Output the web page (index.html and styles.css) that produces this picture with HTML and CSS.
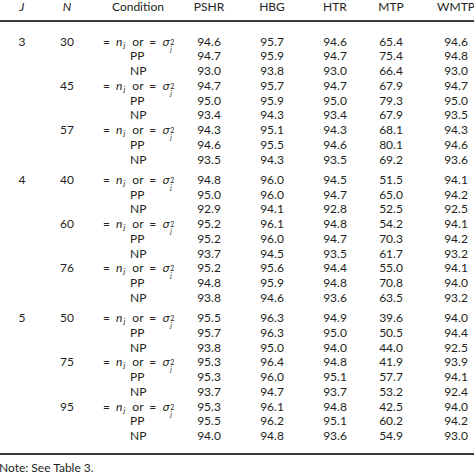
FILE: index.html
```html
<!DOCTYPE html>
<html>
<head>
<meta charset="utf-8">
<link rel="stylesheet" href="styles.css">
</head>
<body>
<div class="page">
  <div class="row head">
    <div class="c"><i>J</i></div>
    <div class="c"><i>N</i></div>
    <div class="c cond-h">Condition</div>
    <div class="c">PSHR</div>
    <div class="c">HBG</div>
    <div class="c">HTR</div>
    <div class="c">MTP</div>
    <div class="c">WMTP</div>
  </div>
  <div class="rule top"></div>
  <div class="body">
    <div class="group">
      <div class="row"><div class="c">3</div><div class="c">30</div><div class="cond eq">= <i>n</i><sub>j</sub> or = <i class="sig">σ</i><span class="ss"><span>2</span><span>j</span></span></div><div class="c">94.6</div><div class="c">95.7</div><div class="c">94.6</div><div class="c">65.4</div><div class="c">94.6</div></div>
      <div class="row"><div class="c"></div><div class="c"></div><div class="cond">PP</div><div class="c">94.7</div><div class="c">95.9</div><div class="c">94.7</div><div class="c">75.4</div><div class="c">94.8</div></div>
      <div class="row"><div class="c"></div><div class="c"></div><div class="cond">NP</div><div class="c">93.0</div><div class="c">93.8</div><div class="c">93.0</div><div class="c">66.4</div><div class="c">93.0</div></div>
      <div class="row"><div class="c"></div><div class="c">45</div><div class="cond eq">= <i>n</i><sub>j</sub> or = <i class="sig">σ</i><span class="ss"><span>2</span><span>j</span></span></div><div class="c">94.7</div><div class="c">95.7</div><div class="c">94.7</div><div class="c">67.9</div><div class="c">94.7</div></div>
      <div class="row"><div class="c"></div><div class="c"></div><div class="cond">PP</div><div class="c">95.0</div><div class="c">95.9</div><div class="c">95.0</div><div class="c">79.3</div><div class="c">95.0</div></div>
      <div class="row"><div class="c"></div><div class="c"></div><div class="cond">NP</div><div class="c">93.4</div><div class="c">94.3</div><div class="c">93.4</div><div class="c">67.9</div><div class="c">93.5</div></div>
      <div class="row"><div class="c"></div><div class="c">57</div><div class="cond eq">= <i>n</i><sub>j</sub> or = <i class="sig">σ</i><span class="ss"><span>2</span><span>j</span></span></div><div class="c">94.3</div><div class="c">95.1</div><div class="c">94.3</div><div class="c">68.1</div><div class="c">94.3</div></div>
      <div class="row"><div class="c"></div><div class="c"></div><div class="cond">PP</div><div class="c">94.6</div><div class="c">95.5</div><div class="c">94.6</div><div class="c">80.1</div><div class="c">94.6</div></div>
      <div class="row"><div class="c"></div><div class="c"></div><div class="cond">NP</div><div class="c">93.5</div><div class="c">94.3</div><div class="c">93.5</div><div class="c">69.2</div><div class="c">93.6</div></div>
    </div>
    <div class="group">
      <div class="row"><div class="c">4</div><div class="c">40</div><div class="cond eq">= <i>n</i><sub>j</sub> or = <i class="sig">σ</i><span class="ss"><span>2</span><span>j</span></span></div><div class="c">94.8</div><div class="c">96.0</div><div class="c">94.5</div><div class="c">51.5</div><div class="c">94.1</div></div>
      <div class="row"><div class="c"></div><div class="c"></div><div class="cond">PP</div><div class="c">95.0</div><div class="c">96.0</div><div class="c">94.7</div><div class="c">65.0</div><div class="c">94.2</div></div>
      <div class="row"><div class="c"></div><div class="c"></div><div class="cond">NP</div><div class="c">92.9</div><div class="c">94.1</div><div class="c">92.8</div><div class="c">52.5</div><div class="c">92.5</div></div>
      <div class="row"><div class="c"></div><div class="c">60</div><div class="cond eq">= <i>n</i><sub>j</sub> or = <i class="sig">σ</i><span class="ss"><span>2</span><span>j</span></span></div><div class="c">95.2</div><div class="c">96.1</div><div class="c">94.8</div><div class="c">54.2</div><div class="c">94.1</div></div>
      <div class="row"><div class="c"></div><div class="c"></div><div class="cond">PP</div><div class="c">95.2</div><div class="c">96.0</div><div class="c">94.7</div><div class="c">70.3</div><div class="c">94.2</div></div>
      <div class="row"><div class="c"></div><div class="c"></div><div class="cond">NP</div><div class="c">93.7</div><div class="c">94.5</div><div class="c">93.5</div><div class="c">61.7</div><div class="c">93.2</div></div>
      <div class="row"><div class="c"></div><div class="c">76</div><div class="cond eq">= <i>n</i><sub>j</sub> or = <i class="sig">σ</i><span class="ss"><span>2</span><span>j</span></span></div><div class="c">95.2</div><div class="c">95.6</div><div class="c">94.4</div><div class="c">55.0</div><div class="c">94.1</div></div>
      <div class="row"><div class="c"></div><div class="c"></div><div class="cond">PP</div><div class="c">94.8</div><div class="c">95.9</div><div class="c">94.8</div><div class="c">70.8</div><div class="c">94.0</div></div>
      <div class="row"><div class="c"></div><div class="c"></div><div class="cond">NP</div><div class="c">93.8</div><div class="c">94.6</div><div class="c">93.6</div><div class="c">63.5</div><div class="c">93.2</div></div>
    </div>
    <div class="group">
      <div class="row"><div class="c">5</div><div class="c">50</div><div class="cond eq">= <i>n</i><sub>j</sub> or = <i class="sig">σ</i><span class="ss"><span>2</span><span>j</span></span></div><div class="c">95.5</div><div class="c">96.3</div><div class="c">94.9</div><div class="c">39.6</div><div class="c">94.0</div></div>
      <div class="row"><div class="c"></div><div class="c"></div><div class="cond">PP</div><div class="c">95.7</div><div class="c">96.3</div><div class="c">95.0</div><div class="c">50.5</div><div class="c">94.4</div></div>
      <div class="row"><div class="c"></div><div class="c"></div><div class="cond">NP</div><div class="c">93.8</div><div class="c">95.0</div><div class="c">94.0</div><div class="c">44.0</div><div class="c">92.5</div></div>
      <div class="row"><div class="c"></div><div class="c">75</div><div class="cond eq">= <i>n</i><sub>j</sub> or = <i class="sig">σ</i><span class="ss"><span>2</span><span>j</span></span></div><div class="c">95.3</div><div class="c">96.4</div><div class="c">94.8</div><div class="c">41.9</div><div class="c">93.9</div></div>
      <div class="row"><div class="c"></div><div class="c"></div><div class="cond">PP</div><div class="c">95.3</div><div class="c">96.0</div><div class="c">95.1</div><div class="c">57.7</div><div class="c">94.1</div></div>
      <div class="row"><div class="c"></div><div class="c"></div><div class="cond">NP</div><div class="c">93.7</div><div class="c">94.7</div><div class="c">93.7</div><div class="c">53.2</div><div class="c">92.4</div></div>
      <div class="row"><div class="c"></div><div class="c">95</div><div class="cond eq">= <i>n</i><sub>j</sub> or = <i class="sig">σ</i><span class="ss"><span>2</span><span>j</span></span></div><div class="c">95.3</div><div class="c">96.1</div><div class="c">94.8</div><div class="c">42.5</div><div class="c">94.0</div></div>
      <div class="row"><div class="c"></div><div class="c"></div><div class="cond">PP</div><div class="c">95.5</div><div class="c">96.2</div><div class="c">95.1</div><div class="c">60.2</div><div class="c">94.2</div></div>
      <div class="row"><div class="c"></div><div class="c"></div><div class="cond">NP</div><div class="c">94.0</div><div class="c">94.8</div><div class="c">93.6</div><div class="c">54.9</div><div class="c">93.0</div></div>
    </div>
  </div>
  <div class="rule bottom"></div>
  <div class="note">Note: See Table 3.</div>
</div>
</body>
</html>
```

FILE: styles.css
```css
html, body {
  margin: 0;
  padding: 0;
  background: #fff;
  overflow: hidden;
}
body {
  width: 474px;
  height: 474px;
  font-family: Lato, "Open Sans", "DejaVu Sans", sans-serif;
  font-size: 12px;
  color: #231f20;
}
.page {
  width: 500px;
}
.row {
  display: grid;
  grid-template-columns: 44px 46px 92px 54px 72px 54px 58px 72px;
  height: 14.75px;
  line-height: 14.75px;
  white-space: nowrap;
}
.c {
  text-align: center;
}
.head {
  height: 14px;
  line-height: 14px;
}
.cond-h {
  text-align: left;
  padding-left: 22px;
}
.rule {
  height: 2px;
  background: #3a3a3a;
  width: 474px;
}
.rule.top {
  margin-top: 6px;
  margin-bottom: 12.6px;
}
.group + .group {
  margin-top: 5.5px;
}
.cond {
  padding-left: 40px;
}
.cond.eq {
  padding-left: 13px;
  word-spacing: 3px;
}
.cond i {
  font-style: italic;
}
.cond sub {
  font-size: 8px;
  vertical-align: -2px;
  line-height: 0;
  font-style: italic;
  margin-left: 1px;
  margin-right: 1px;
}
.sig {
  font-family: "DejaVu Sans", sans-serif;
  font-size: 11px;
}
.ss {
  display: inline-flex;
  flex-direction: column;
  vertical-align: 1px;
  font-size: 7px;
  line-height: 7px;
  margin-left: 1px;
  height: 14px;
}
.ss span:last-child {
  font-style: italic;
}
.rule.bottom {
  margin-top: 9px;
}
.note {
  margin-top: 6px;
  margin-left: -1px;
  line-height: 14px;
}
```
